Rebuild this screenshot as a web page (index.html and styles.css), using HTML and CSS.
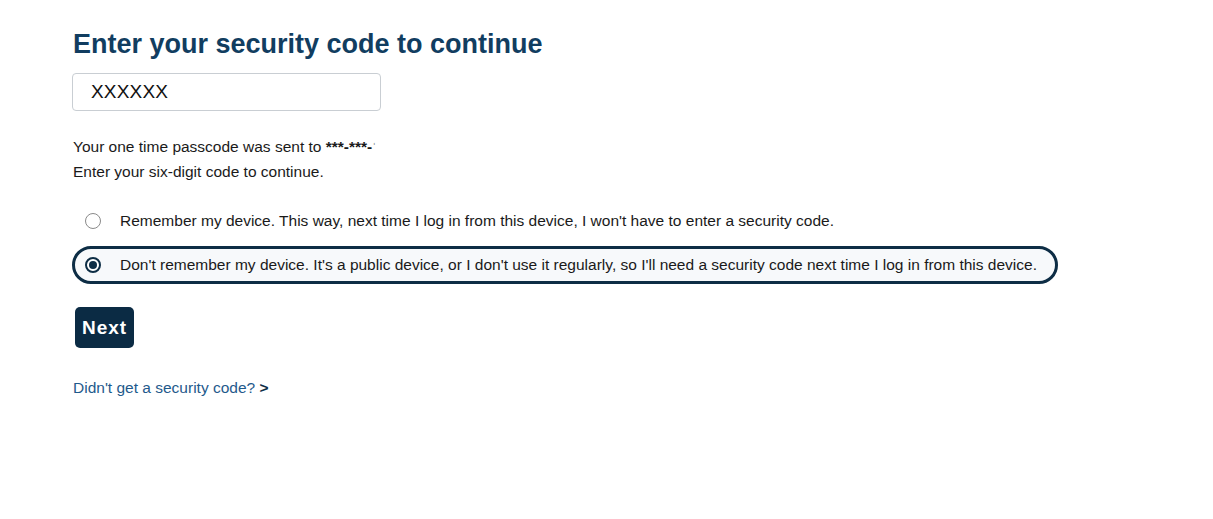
FILE: index.html
```html
<!DOCTYPE html>
<html lang="en">
<head>
<meta charset="utf-8">
<title>Enter your security code</title>
<link rel="stylesheet" href="styles.css">
</head>
<body>
<main class="page">
  <h1 class="title">Enter your security code to continue</h1>
  <div class="field"><span class="field-value">XXXXXX</span></div>
  <p class="info">Your one time passcode was sent to <b>***-***-</b><span class="tick">ˈ</span><br>Enter your six-digit code to continue.</p>
  <div class="options">
    <label class="option">
      <span class="radio"></span>
      <span class="option-text">Remember my device. This way, next time I log in from this device, I won't have to enter a security code.</span>
    </label>
    <label class="option selected">
      <span class="radio checked"></span>
      <span class="option-text">Don't remember my device. It's a public device, or I don't use it regularly, so I'll need a security code next time I log in from this device.</span>
    </label>
  </div>
  <button class="next">Next</button>
  <p class="help"><a class="help-link" href="#">Didn't get a security code?</a> <span class="chev">&gt;</span></p>
</main>
</body>
</html>
```
FILE: styles.css
```css
* { box-sizing: border-box; }
body {
  margin: 0;
  background: #fff;
  font-family: "Liberation Sans", Arial, sans-serif;
  color: #1a1a1a;
}
.page {
  padding: 28px 0 0 73px;
  display: flex;
  flex-direction: column;
  align-items: flex-start;
}
.title {
  margin: 0;
  font-size: 27px;
  line-height: 32px;
  font-weight: bold;
  color: #113d60;
}
.field {
  margin-top: 13px;
  margin-left: -1px;
  width: 309px;
  height: 38px;
  border: 1px solid #c9ced3;
  border-radius: 4px;
  padding: 0 18px;
  display: flex;
  align-items: center;
}
.field-value {
  font-size: 19px;
  color: #111;
  letter-spacing: 0.2px;
}
.info {
  margin: 24px 0 0 0;
  font-size: 15.5px;
  line-height: 24px;
  color: #1a1a1a;
}
.tick {
  color: #777;
  font-size: 12px;
}
.options {
  margin-top: 18px;
  margin-left: -1px;
  display: flex;
  flex-direction: column;
  gap: 6px;
}
.option {
  display: flex;
  align-items: center;
  gap: 19px;
  height: 38px;
  padding: 0 18px 0 10px;
  border: 3px solid transparent;
  border-radius: 20px;
  font-size: 15.5px;
  color: #1a1a1a;
}
.option.selected {
  border-color: #0d2d45;
  background: #f7f9fb;
}
.radio {
  width: 16px;
  height: 16px;
  border-radius: 50%;
  border: 1px solid #8a8a8a;
  background: #fff;
  flex: none;
  position: relative;
}
.radio.checked {
  border: 2px solid #0d2d45;
}
.radio.checked::after {
  content: "";
  position: absolute;
  left: 2px;
  top: 2px;
  width: 8px;
  height: 8px;
  border-radius: 50%;
  background: #0d2d45;
}
.next {
  margin-top: 23px;
  margin-left: 2px;
  width: 59px;
  height: 41px;
  border: 0;
  border-radius: 5px;
  background: #0b2b44;
  color: #fff;
  font-family: "Liberation Sans", Arial, sans-serif;
  font-size: 19px;
  font-weight: bold;
  letter-spacing: 1px;
  padding: 0;
}
.help {
  margin: 28px 0 0 0;
  font-size: 15.5px;
  line-height: 24px;
}
.help-link {
  color: #1f5a8c;
  text-decoration: none;
}
.chev {
  font-weight: bold;
  color: #0d2d45;
}
```
